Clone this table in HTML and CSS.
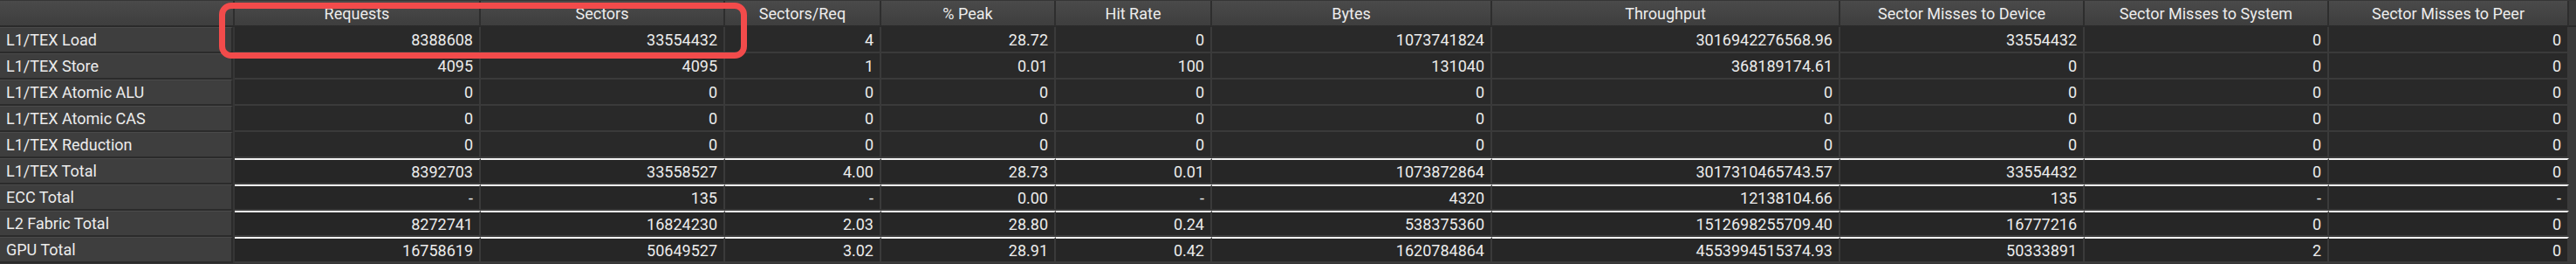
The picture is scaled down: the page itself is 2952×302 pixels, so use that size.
FILE: index.html
```html
<!DOCTYPE html>
<html>
<head>
<meta charset="utf-8">
<link rel="stylesheet" href="styles.css">
</head>
<body>
<div class="wrap">
  <div class="table">
    <div class="hcell corner"></div>
    <div class="hcell">Requests</div>
    <div class="hcell">Sectors</div>
    <div class="hcell">Sectors/Req</div>
    <div class="hcell">% Peak</div>
    <div class="hcell">Hit Rate</div>
    <div class="hcell">Bytes</div>
    <div class="hcell">Throughput</div>
    <div class="hcell">Sector Misses to Device</div>
    <div class="hcell">Sector Misses to System</div>
    <div class="hcell">Sector Misses to Peer</div>
    <div class="filler hfill"></div>

    <div class="lcell">L1/TEX Load</div>
    <div class="dcell">8388608</div><div class="dcell">33554432</div><div class="dcell">4</div><div class="dcell">28.72</div><div class="dcell">0</div><div class="dcell">1073741824</div><div class="dcell">3016942276568.96</div><div class="dcell">33554432</div><div class="dcell">0</div><div class="dcell">0</div>
    <div class="filler"></div>

    <div class="lcell">L1/TEX Store</div>
    <div class="dcell">4095</div><div class="dcell">4095</div><div class="dcell">1</div><div class="dcell">0.01</div><div class="dcell">100</div><div class="dcell">131040</div><div class="dcell">368189174.61</div><div class="dcell">0</div><div class="dcell">0</div><div class="dcell">0</div>
    <div class="filler"></div>

    <div class="lcell">L1/TEX Atomic ALU</div>
    <div class="dcell">0</div><div class="dcell">0</div><div class="dcell">0</div><div class="dcell">0</div><div class="dcell">0</div><div class="dcell">0</div><div class="dcell">0</div><div class="dcell">0</div><div class="dcell">0</div><div class="dcell">0</div>
    <div class="filler"></div>

    <div class="lcell">L1/TEX Atomic CAS</div>
    <div class="dcell">0</div><div class="dcell">0</div><div class="dcell">0</div><div class="dcell">0</div><div class="dcell">0</div><div class="dcell">0</div><div class="dcell">0</div><div class="dcell">0</div><div class="dcell">0</div><div class="dcell">0</div>
    <div class="filler"></div>

    <div class="lcell">L1/TEX Reduction</div>
    <div class="dcell">0</div><div class="dcell">0</div><div class="dcell">0</div><div class="dcell">0</div><div class="dcell">0</div><div class="dcell">0</div><div class="dcell">0</div><div class="dcell">0</div><div class="dcell">0</div><div class="dcell">0</div>
    <div class="filler"></div>

    <div class="lcell">L1/TEX Total</div>
    <div class="dcell total">8392703</div><div class="dcell total">33558527</div><div class="dcell total">4.00</div><div class="dcell total">28.73</div><div class="dcell total">0.01</div><div class="dcell total">1073872864</div><div class="dcell total">3017310465743.57</div><div class="dcell total">33554432</div><div class="dcell total">0</div><div class="dcell total">0</div>
    <div class="filler"></div>

    <div class="lcell">ECC Total</div>
    <div class="dcell total">-</div><div class="dcell total">135</div><div class="dcell total">-</div><div class="dcell total">0.00</div><div class="dcell total">-</div><div class="dcell total">4320</div><div class="dcell total">12138104.66</div><div class="dcell total">135</div><div class="dcell total">-</div><div class="dcell total">-</div>
    <div class="filler"></div>

    <div class="lcell">L2 Fabric Total</div>
    <div class="dcell total">8272741</div><div class="dcell total">16824230</div><div class="dcell total">2.03</div><div class="dcell total">28.80</div><div class="dcell total">0.24</div><div class="dcell total">538375360</div><div class="dcell total">1512698255709.40</div><div class="dcell total">16777216</div><div class="dcell total">0</div><div class="dcell total">0</div>
    <div class="filler"></div>

    <div class="lcell">GPU Total</div>
    <div class="dcell total">16758619</div><div class="dcell total">50649527</div><div class="dcell total">3.02</div><div class="dcell total">28.91</div><div class="dcell total">0.42</div><div class="dcell total">1620784864</div><div class="dcell total">4553994515374.93</div><div class="dcell total">50333891</div><div class="dcell total">2</div><div class="dcell total">0</div>
    <div class="filler"></div>
  </div>
  <div class="highlight"></div>
</div>
</body>
</html>
```

FILE: styles.css
```css
html, body {
  margin: 0;
  padding: 0;
  background: #353535;
}

.wrap {
  position: relative;
  width: 2952px;
  height: 302px;
  overflow: hidden;
  font-family: Roboto, "Liberation Sans", sans-serif;
  font-size: 18px;
  color: #ececec;
}

.table {
  display: grid;
  grid-template-columns: 269px 282px 280px 179px 200px 179px 321px 399px 280px 280px 275px 1fr;
  grid-auto-rows: 30px;
  padding-top: 1px;
  background: #363636;
}

.hcell {
  background: linear-gradient(#4a4a4a, #3e3e3e);
  border-right: 2px solid #2e2e2e;
  border-bottom: 2px solid #2a2a2a;
  display: flex;
  align-items: center;
  justify-content: center;
  white-space: nowrap;
}

.hfill {
  background: linear-gradient(#4a4a4a, #3e3e3e);
  border-bottom: 2px solid #2a2a2a;
}

.lcell {
  background: #3e3e3e;
  border-top: 1px solid #4a4a4a;
  border-bottom: 2px solid #2b2b2b;
  border-right: 2px solid #2b2b2b;
  margin-right: 2px;
  display: flex;
  align-items: center;
  padding-left: 7px;
  white-space: nowrap;
}

.dcell {
  background: #292929;
  border-right: 2px solid #3a3a3a;
  border-bottom: 2px solid #3a3a3a;
  display: flex;
  align-items: center;
  justify-content: flex-end;
  padding-right: 7px;
  white-space: nowrap;
}

.dcell.total {
  background: #262626;
  border-top: 2px solid #f2f2f2;
}

.filler {
  background: #3a3a3a;
}

.highlight {
  position: absolute;
  left: 251px;
  top: 3px;
  width: 605px;
  height: 64px;
  box-sizing: border-box;
  border: 7px solid #f24b4b;
  border-radius: 14px;
}
```
